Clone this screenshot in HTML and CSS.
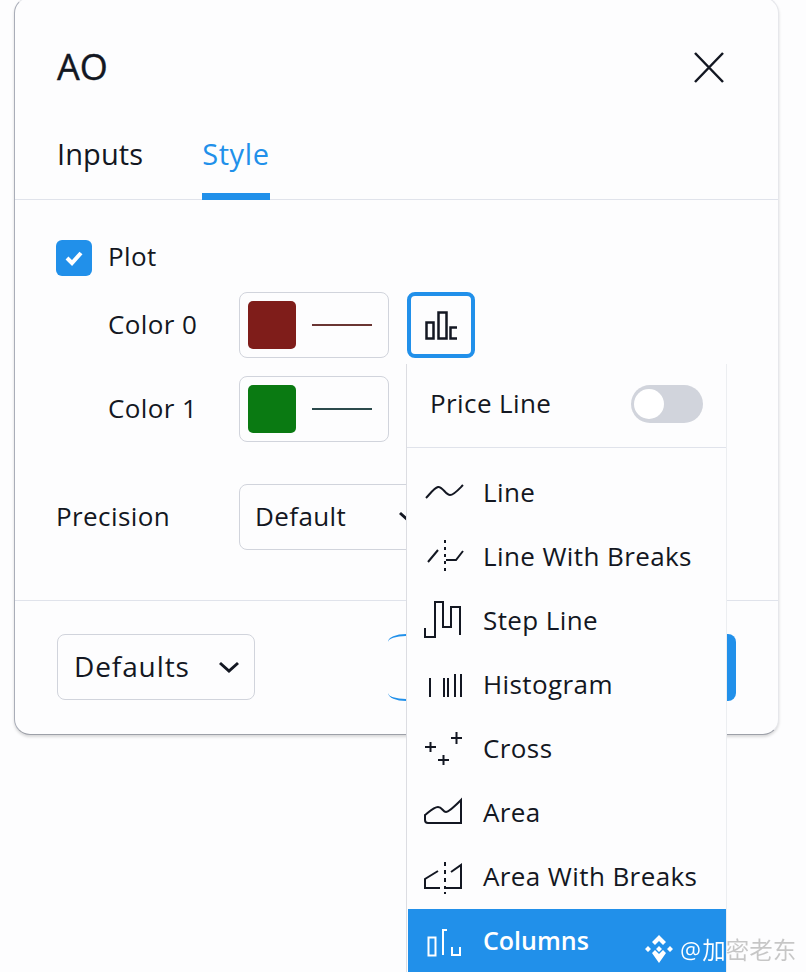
FILE: index.html
```html
<!DOCTYPE html>
<html lang="en">
<head>
  <meta charset="UTF-8">
  <title>AO settings</title>
  <link rel="stylesheet" href="styles.css">
</head>
<body>
  <div class="dialog">
    <div class="dialog-head">
      <div class="dialog-title">AO</div>
      <svg class="icon-close" width="32" height="32" viewBox="0 0 32 32"><path d="M2 2l28 29M30 2L2 31"/></svg>
    </div>
    <div class="tabs">
      <div class="tab">Inputs</div>
      <div class="tab active">Style</div>
    </div>

    <div class="dialog-body">
      <div class="plot-row">
        <span class="checkbox">
          <svg width="22" height="18" viewBox="0 0 22 18"><path d="M4 9l5 5 9-10"/></svg>
        </span>
        <span class="plot-label">Plot</span>
      </div>
      <div class="field-row first">
        <span class="field-label indent"><span class="txt">Color 0</span></span>
        <div class="color-box">
          <span class="swatch red"></span>
          <span class="thin-line red-line"></span>
        </div>
        <div class="type-button">
          <svg class="icon bold" width="36" height="30" viewBox="0 0 36 30"><path d="M3.500 12.500h7v16h-7zM15.500 2.500h8v26h-8zM34 17.500h-6.500v11H34"/></svg>
        </div>
      </div>
      <div class="field-row second">
        <span class="field-label indent"><span class="txt">Color 1</span></span>
        <div class="color-box">
          <span class="swatch green"></span>
          <span class="thin-line green-line"></span>
        </div>
      </div>
      <div class="field-row third">
        <span class="field-label"><span class="txt">Precision</span></span>
        <div class="select precision-select">
          <span class="txt">Default</span>
          <svg class="chevron" width="22" height="12" viewBox="0 0 22 12"><path d="M2 2l9 8 9-8"/></svg>
        </div>
      </div>
    </div>

    <div class="dialog-foot">
      <div class="select defaults-select">
        <span class="txt">Defaults</span>
        <svg class="chevron" width="22" height="12" viewBox="0 0 22 12"><path d="M2 2l9 8 9-8"/></svg>
      </div>
      <div class="foot-buttons">
        <div class="btn-cancel"></div>
        <div class="btn-ok"></div>
      </div>
    </div>
  </div>

  <div class="menu">
    <div class="menu-top">
      <span>Price Line</span>
      <span class="toggle"><span class="knob"></span></span>
    </div>
    <div class="menu-list">
      <div class="menu-item">
        <svg class="icon" width="40" height="40" viewBox="0 0 40 40"><path d="M2 25c4-4 8-10 12-11s8 8 12 8 9-6 13-10"/></svg>
        <span class="txt">Line</span>
      </div>
      <div class="menu-item">
        <svg class="icon" width="40" height="40" viewBox="0 0 40 40"><path d="M4 25l10-12M21 3v3M21 10v3M21 17v3M21 24v3M21 31v3M22 23h10l7-9"/></svg>
        <span class="txt">Line With Breaks</span>
      </div>
      <div class="menu-item">
        <svg class="icon" width="40" height="40" viewBox="0 0 40 40"><path d="M1 27v9h10V1h8v25h8V6h9v28"/></svg>
        <span class="txt">Step Line</span>
      </div>
      <div class="menu-item">
        <svg class="icon" width="40" height="40" viewBox="0 0 40 40"><path d="M6 13v19M20 13v19M24 13v19M31 9v23M37 9v23"/></svg>
        <span class="txt">Histogram</span>
      </div>
      <div class="menu-item">
        <svg class="icon" width="40" height="40" viewBox="0 0 40 40"><path d="M1 18h11M6.500 13v10M27 9h11M32.500 3v12M14 31h11M19.500 26v10"/></svg>
        <span class="txt">Cross</span>
      </div>
      <div class="menu-item">
        <svg class="icon" width="40" height="40" viewBox="0 0 40 40"><path d="M1 22c5-4 9-8 13-8s5 5 8 5 10-7 15-12v23H4q-3 0-3-3z"/></svg>
        <span class="txt">Area</span>
      </div>
      <div class="menu-item">
        <svg class="icon" width="40" height="40" viewBox="0 0 40 40"><path d="M14 14l-13 8v9h15M21 5v4M21 13v4M21 21v4M21 29v3M21 35v2M22 31h15V8l-10 7"/></svg>
        <span class="txt">Area With Breaks</span>
      </div>
      <div class="menu-item selected">
        <svg class="icon" width="40" height="40" viewBox="0 0 40 40"><path d="M4.500 16.500h7v18h-7zM19 34V9h4M28 26v8h8v-8"/></svg>
        <span class="txt">Columns</span>
      </div>
    </div>
  </div>

  <div class="watermark">
    <svg width="28" height="28" viewBox="0 0 28 28"><path d="M14 0l7 7-3 3-4-4-4 4-3-3zM0 14l3-3 3 3-3 3zM22 14l3-3 3 3-3 3zM14 11l3 3-3 3-3-3zM7 18l3-3 4 4 4-4 3 3-7 10z"/></svg>
    <span class="watermark-text">@ 加密老东</span>
  </div>
</body>
</html>
```

FILE: styles.css
```css
body {
  margin: 0;
  height: 972px;
  overflow: hidden;
  position: relative;
  background: #fdfdfe;
  color: #131722;
  font-family: "Open Sans", Arial, sans-serif;
  font-size: 26px;
  letter-spacing: 0.4px;
}

/* nudges text up a pixel from the flex centre */
.txt {
  display: block;
  margin-bottom: 2px;
}

.dialog {
  box-sizing: border-box;
  width: 765px;
  height: 738px;
  margin: -3px 0 0 14px;
  background: #fdfdfe;
  border: 1px solid #e6e7eb;
  border-left-color: #a9adb8;
  border-bottom-color: #9da0a8;
  border-radius: 16px;
  box-shadow: 0 2px 3px rgba(0, 0, 0, 0.15);
}

.dialog-head {
  height: 113px;
  padding: 24px 53px 0 42px;
  display: flex;
  align-items: center;
  justify-content: space-between;
  box-sizing: border-box;
}

.dialog-title {
  font-size: 36px;
  font-weight: 500;
  letter-spacing: 0;
  -webkit-text-stroke: 0.4px #131722;
}

.icon-close {
  fill: none;
  stroke: #131722;
  stroke-width: 2.5;
}

.tabs {
  height: 89px;
  box-sizing: border-box;
  padding-left: 42px;
  display: flex;
  gap: 59px;
  border-bottom: 1px solid #e0e3eb;
}

.tab {
  font-size: 29px;
  line-height: 86px;
  letter-spacing: 0.1px;
}

.tab.active {
  color: #2190ea;
  width: 68px;
  height: 89px;
  box-sizing: border-box;
  border-bottom: 7px solid #2190ea;
  letter-spacing: 0.6px;
}

.dialog-body {
  height: 400px;
  box-sizing: border-box;
  padding: 40px 0 0 41px;
}

.plot-row {
  display: flex;
  align-items: center;
  gap: 16px;
  height: 36px;
}

.plot-label {
  margin-bottom: 4px;
}

.checkbox {
  width: 36px;
  height: 36px;
  border-radius: 6px;
  background: #2190ea;
  display: flex;
  align-items: center;
  justify-content: center;
}

.checkbox svg {
  fill: none;
  stroke: #fff;
  stroke-width: 4;
}

.field-row {
  display: flex;
  align-items: center;
  height: 66px;
}

.field-row.first {
  margin-top: 16px;
}

.field-row.second {
  margin-top: 18px;
}

.field-row.third {
  margin-top: 42px;
}

.field-label {
  width: 183px;
  flex-shrink: 0;
}

.field-label.indent {
  box-sizing: border-box;
  padding-left: 52px;
}

.color-box {
  box-sizing: border-box;
  width: 150px;
  height: 66px;
  border: 1px solid #d1d4dc;
  border-radius: 8px;
  display: flex;
  align-items: center;
  padding-left: 8px;
  gap: 16px;
}

.swatch {
  width: 48px;
  height: 48px;
  border-radius: 5px;
}

.swatch.red {
  background: #7f1d1a;
}

.swatch.green {
  background: #0a7a12;
}

.thin-line {
  width: 60px;
  height: 2px;
}

.red-line {
  background: #6a3533;
}

.green-line {
  background: #2c4a4c;
}

.type-button {
  box-sizing: border-box;
  width: 68px;
  height: 66px;
  margin-left: 18px;
  border: 4px solid #2190ea;
  border-radius: 8px;
  display: flex;
  align-items: center;
  justify-content: center;
}

.icon {
  flex-shrink: 0;
  fill: none;
  stroke: #131722;
  stroke-width: 2;
}

.icon.bold {
  stroke-width: 2.5;
}

.select {
  box-sizing: border-box;
  height: 66px;
  border: 1px solid #d1d4dc;
  border-radius: 8px;
  display: flex;
  align-items: center;
  justify-content: space-between;
  padding: 0 14px 0 15px;
}

.precision-select {
  width: 196px;
}

.chevron {
  fill: none;
  stroke: #131722;
  stroke-width: 3;
}

.dialog-foot {
  height: 134px;
  box-sizing: border-box;
  border-top: 1px solid #e0e3eb;
  padding: 33px 42px 0 42px;
  display: flex;
  justify-content: space-between;
  align-items: flex-start;
}

.defaults-select {
  width: 198px;
  font-size: 28px;
  padding-left: 16px;
  letter-spacing: 0.9px;
}

.foot-buttons {
  display: flex;
  gap: 16px;
  height: 67px;
}

.btn-cancel {
  box-sizing: border-box;
  width: 216px;
  height: 67px;
  border: 2px solid #2190ea;
  border-left-width: 0;
  border-radius: 18px / 8px;
}

.btn-ok {
  width: 116px;
  height: 67px;
  background: #2190ea;
  border-radius: 8px;
}

/* dropdown sits on top of the dialog */
.menu {
  position: absolute;
  left: 406px;
  top: 364px;
  width: 321px;
  height: 608px;
  box-sizing: border-box;
  background: #fdfdfe;
  border-left: 1px solid #dcdde2;
  border-right: 1px solid #eceef1;
}

.menu-top {
  height: 84px;
  box-sizing: border-box;
  border-bottom: 1px solid #e0e3eb;
  padding: 0 23px 6px;
  display: flex;
  align-items: center;
  justify-content: space-between;
}

.toggle {
  width: 72px;
  height: 38px;
  margin-top: 6px;
  margin-bottom: 4px;
  border-radius: 19px;
  background: #d1d4dc;
  display: flex;
  align-items: center;
  padding-left: 3px;
  box-sizing: border-box;
}

.knob {
  width: 30px;
  height: 30px;
  border-radius: 50%;
  background: #fff;
}

.menu-list {
  padding-top: 13px;
}

.menu-item {
  height: 64px;
  box-sizing: border-box;
  padding-left: 17px;
  display: flex;
  align-items: center;
  gap: 19px;
}

.menu-item.selected {
  background: #2190ea;
  color: #fff;
  font-weight: 600;
  font-size: 25px;
  letter-spacing: 0;
  margin-left: 1px;
  padding-left: 16px;
}

.menu-item.selected .icon {
  stroke: #fff;
}

.watermark {
  position: absolute;
  left: 645px;
  top: 932px;
  display: flex;
  align-items: center;
  gap: 7px;
  letter-spacing: 0;
}

.watermark svg {
  fill: #fff;
}

.watermark-text {
  font-family: "Open Sans", "Noto Sans CJK SC", sans-serif;
  font-size: 23.5px;
  word-spacing: -5px;
  background: linear-gradient(to right, #fff 46px, #c6c6c6 46px);
  -webkit-background-clip: text;
  background-clip: text;
  color: transparent;
}
```
